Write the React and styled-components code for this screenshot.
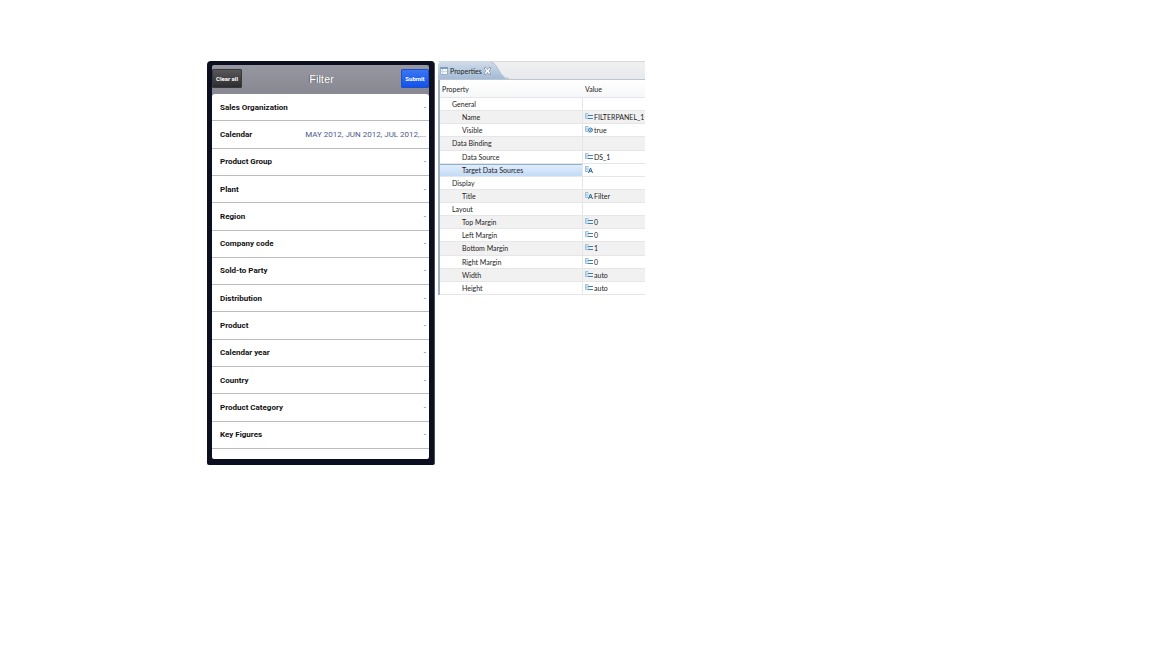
import styled, { createGlobalStyle } from "styled-components";

const filters = [
    { name: "Sales Organization", value: "-" },
    { name: "Calendar", value: "MAY 2012, JUN 2012, JUL 2012,..." },
    { name: "Product Group", value: "-" },
    { name: "Plant", value: "-" },
    { name: "Region", value: "-" },
    { name: "Company code", value: "-" },
    { name: "Sold-to Party", value: "-" },
    { name: "Distribution", value: "-" },
    { name: "Product", value: "-" },
    { name: "Calendar year", value: "-" },
    { name: "Country", value: "-" },
    { name: "Product Category", value: "-" },
    { name: "Key Figures", value: "-" },
];

const properties = [
    { name: "General", group: true },
    { name: "Name", value: "FILTERPANEL_1", icon: "list" },
    { name: "Visible", value: "true", icon: "bool" },
    { name: "Data Binding", group: true },
    { name: "Data Source", value: "DS_1", icon: "list" },
    { name: "Target Data Sources", value: "", icon: "text", selected: true },
    { name: "Display", group: true },
    { name: "Title", value: "Filter", icon: "text" },
    { name: "Layout", group: true },
    { name: "Top Margin", value: "0", icon: "list" },
    { name: "Left Margin", value: "0", icon: "list" },
    { name: "Bottom Margin", value: "1", icon: "list" },
    { name: "Right Margin", value: "0", icon: "list" },
    { name: "Width", value: "auto", icon: "list" },
    { name: "Height", value: "auto", icon: "list" },
];

function ValueIcon({ type }) {
    return (
        <Icon width="8" height="8" viewBox="0 0 8 8" aria-hidden="true">
            <path d="M0 0h4v6H0z" fill="#d5e6f2" />
            <path d="M3 .5H.5v5H3" fill="none" stroke="#9dc0d9" />
            <path d="M1.5 3h1" stroke="#6f9fc0" />
            {type === "list" && (
                <path d="M3 2.5h5M3 5.5h5" stroke="#3d7fae" />
            )}
            {type === "bool" && (
                <>
                    <circle cx="5.5" cy="4" r="2" fill="#b9d5e8" stroke="#4d86b0" />
                    <path d="M4 6.500 7 2" stroke="#3d7fae" strokeWidth=".7" />
                </>
            )}
            {type === "text" && (
                <path d="M3.500 7 5.500 2l2 5M4.500 5.300h2" fill="none" stroke="#23648f" />
            )}
        </Icon>
    );
}

function FilterPanel() {
    return (
        <Phone>
            <Header>
                <ClearButton type="button">Clear all</ClearButton>
                <Title>Filter</Title>
                <SubmitButton type="button">Submit</SubmitButton>
            </Header>
            <List>
                {filters.map((filter) => (
                    <Item key={filter.name}>
                        <ItemButton type="button">
                            <span>{filter.name}</span>
                            <ItemValue>{filter.value}</ItemValue>
                        </ItemButton>
                    </Item>
                ))}
            </List>
        </Phone>
    );
}

function PropertiesView() {
    return (
        <View>
            <TabBar>
                <Tab>
                    <svg width="8" height="8" viewBox="0 0 8 8" aria-hidden="true">
                        <path d="M.5.5h7v7h-7z" fill="#f4f8fb" stroke="#9db2c8" />
                        <path d="M0 1h8" stroke="#7f9cbb" strokeWidth="2" />
                        <path d="M1 4.500h6M2.500 2v5" stroke="#cbd8e4" />
                    </svg>
                    Properties
                    <CloseButton type="button" aria-label="Close">
                        <svg width="7" height="8" viewBox="0 0 7 8">
                            <path
                                d="M.5.5h1.500l1.500 2 1.500-2h1.500v1.500L5 4l1.500 2v1.500H5l-1.500-2-1.500 2H.5V6L2 4 .5 2z"
                                fill="#fff"
                                stroke="#7d8da0"
                                strokeWidth=".8"
                            />
                        </svg>
                    </CloseButton>
                </Tab>
                <TabEdge viewBox="0 0 20 18" preserveAspectRatio="none" aria-hidden="true">
                    <path d="M0 0C8 0 9 18 20 18H0z" fill="url(#tabFill)" />
                    <path d="M0 .5C8 .5 9 17.500 20 17.500" fill="none" stroke="#b4c0ce" />
                    <defs>
                        <linearGradient id="tabFill" x1="0" y1="0" x2="0" y2="1">
                            <stop offset="0" stopColor="#cfdbe9" />
                            <stop offset="1" stopColor="#a3bbd6" />
                        </linearGradient>
                    </defs>
                </TabEdge>
            </TabBar>
            <Table>
                <thead>
                    <tr>
                        <HeadCell scope="col">Property</HeadCell>
                        <HeadCell scope="col" $value>
                            Value
                        </HeadCell>
                    </tr>
                </thead>
                <tbody>
                    {properties.map((property) => (
                        <Row key={property.name} $selected={property.selected}>
                            <NameCell $group={property.group} $selected={property.selected}>
                                {property.name}
                            </NameCell>
                            <ValueCell>
                                {property.icon && <ValueIcon type={property.icon} />}
                                {property.value}
                            </ValueCell>
                        </Row>
                    ))}
                </tbody>
            </Table>
        </View>
    );
}

function App() {
    return (
        <>
            <GlobalStyle />
            <Screen>
                <FilterPanel />
                <PropertiesView />
            </Screen>
        </>
    );
}

const GlobalStyle = createGlobalStyle`
    * {
        box-sizing: border-box;
    }

    body {
        margin: 0;
        background-color: #ffffff;
        font-family: Roboto, "Liberation Sans", Arial, sans-serif;
    }

    button {
        padding: 0;
        border: none;
        font-family: inherit;
        cursor: pointer;
    }
`;

const Screen = styled.main`
    padding: 61px 0 0 207px;
    display: flex;
    align-items: flex-start;
`;

const Phone = styled.section`
    width: 228px;
    padding: 4px 5px 6px 5px;
    background-color: #0b0f20;
    border-right: 1px solid #4a4d5c;
    border-radius: 4px 4px 2px 2px;
`;

const Header = styled.header`
    height: 29px;
    padding-bottom: 2px;
    display: flex;
    align-items: center;
    justify-content: space-between;
    background: linear-gradient(#9697a1, #878892);
    border-radius: 2px 2px 0 0;
`;

const Title = styled.h1`
    margin: 0;
    font-family: "Liberation Sans", Arial, sans-serif;
    font-size: 11px;
    font-weight: 400;
    color: #ffffff;
    text-shadow: -1px 0 0 #5d5e67;
`;

const HeaderButton = styled.button`
    height: 19px;
    font-size: 6px;
    font-weight: 700;
    color: #ffffff;
    border-radius: 2px;
`;

const ClearButton = styled(HeaderButton)`
    width: 30px;
    background: linear-gradient(#5b5b5d, #2a2a2c);
    box-shadow: inset 0 0 0 1px #38383a;
`;

const SubmitButton = styled(HeaderButton)`
    width: 28px;
    background: linear-gradient(#3c78f4, #0f50ea);
    box-shadow: inset 0 0 0 1px #1c4fc8;
`;

const List = styled.ul`
    margin: 0;
    padding: 0 0 10px;
    display: grid;
    grid-template-rows: repeat(13, 1fr);
    height: 365px;
    list-style: none;
    background-color: #ffffff;
    border-radius: 3px 3px 2px 2px;
    box-shadow: 0 -3px 0 #888993;
`;

const Item = styled.li`
    display: flex;
    border-bottom: 1px solid #bcbcbe;
`;

const ItemButton = styled.button`
    flex: 1;
    padding: 0 3px 0 8px;
    display: flex;
    align-items: center;
    justify-content: space-between;
    background: none;
    font-size: 8px;
    font-weight: 700;
    color: #101010;
`;

const ItemValue = styled.span`
    font-weight: 400;
    color: #4b5a8c;
`;

const View = styled.section`
    flex: 0 0 210px;
    padding-left: 3px;
    font-family: Lato, "Liberation Sans", sans-serif;
    font-size: 7px;
    color: #1c1c1c;
`;

const TabBar = styled.div`
    height: 19px;
    display: flex;
    background: linear-gradient(#f0f0f1, #e7e9ec);
    border-top: 1px solid #d5d8dc;
    border-bottom: 1px solid #b9c6d5;
`;

const Tab = styled.div`
    padding: 0 0 0 2px;
    display: flex;
    align-items: center;
    gap: 2px;
    background: linear-gradient(#cfdbe9, #a3bbd6);
    border-radius: 4px 0 0 0;
`;

const CloseButton = styled.button`
    display: flex;
    background: none;
`;

const TabEdge = styled.svg`
    width: 18px;
    height: 17px;
`;

const Table = styled.table`
    width: 100%;
    height: 215px;
    table-layout: fixed;
    border-collapse: separate;
    border-spacing: 0;
    border-left: 2px solid #9fb0c6;
`;

const HeadCell = styled.th`
    width: ${(props) => (props.$value ? "62px" : "auto")};
    height: 18px;
    padding: 0 2px;
    font-weight: 400;
    text-align: left;
    background: linear-gradient(#ffffff, #f6f7f8);
    border-bottom: 1px solid #e4e6e9;
`;

const Row = styled.tr`
    &:nth-child(even) {
        background-color: ${(props) => (props.$selected ? "#ffffff" : "#f1f1f1")};
    }
`;

const Cell = styled.td`
    height: 13px;
    line-height: 12px;
    border-bottom: 1px solid #e6e6e6;
    white-space: nowrap;
`;

const NameCell = styled(Cell)`
    padding: 0 0 0 ${(props) => (props.$group ? "12px" : "22px")};
    border-right: 1px solid #e6e6e6;
    ${(props) =>
        props.$selected &&
        `
        background: linear-gradient(#e3eefb, #c3dbf6);
        box-shadow: inset 0 1px 0 #8fb0d6;
    `}
`;

const ValueCell = styled(Cell)`
    padding: 0 0 0 2px;
`;

const Icon = styled.svg`
    margin-right: 1px;
    vertical-align: -1px;
`;

export default App;
